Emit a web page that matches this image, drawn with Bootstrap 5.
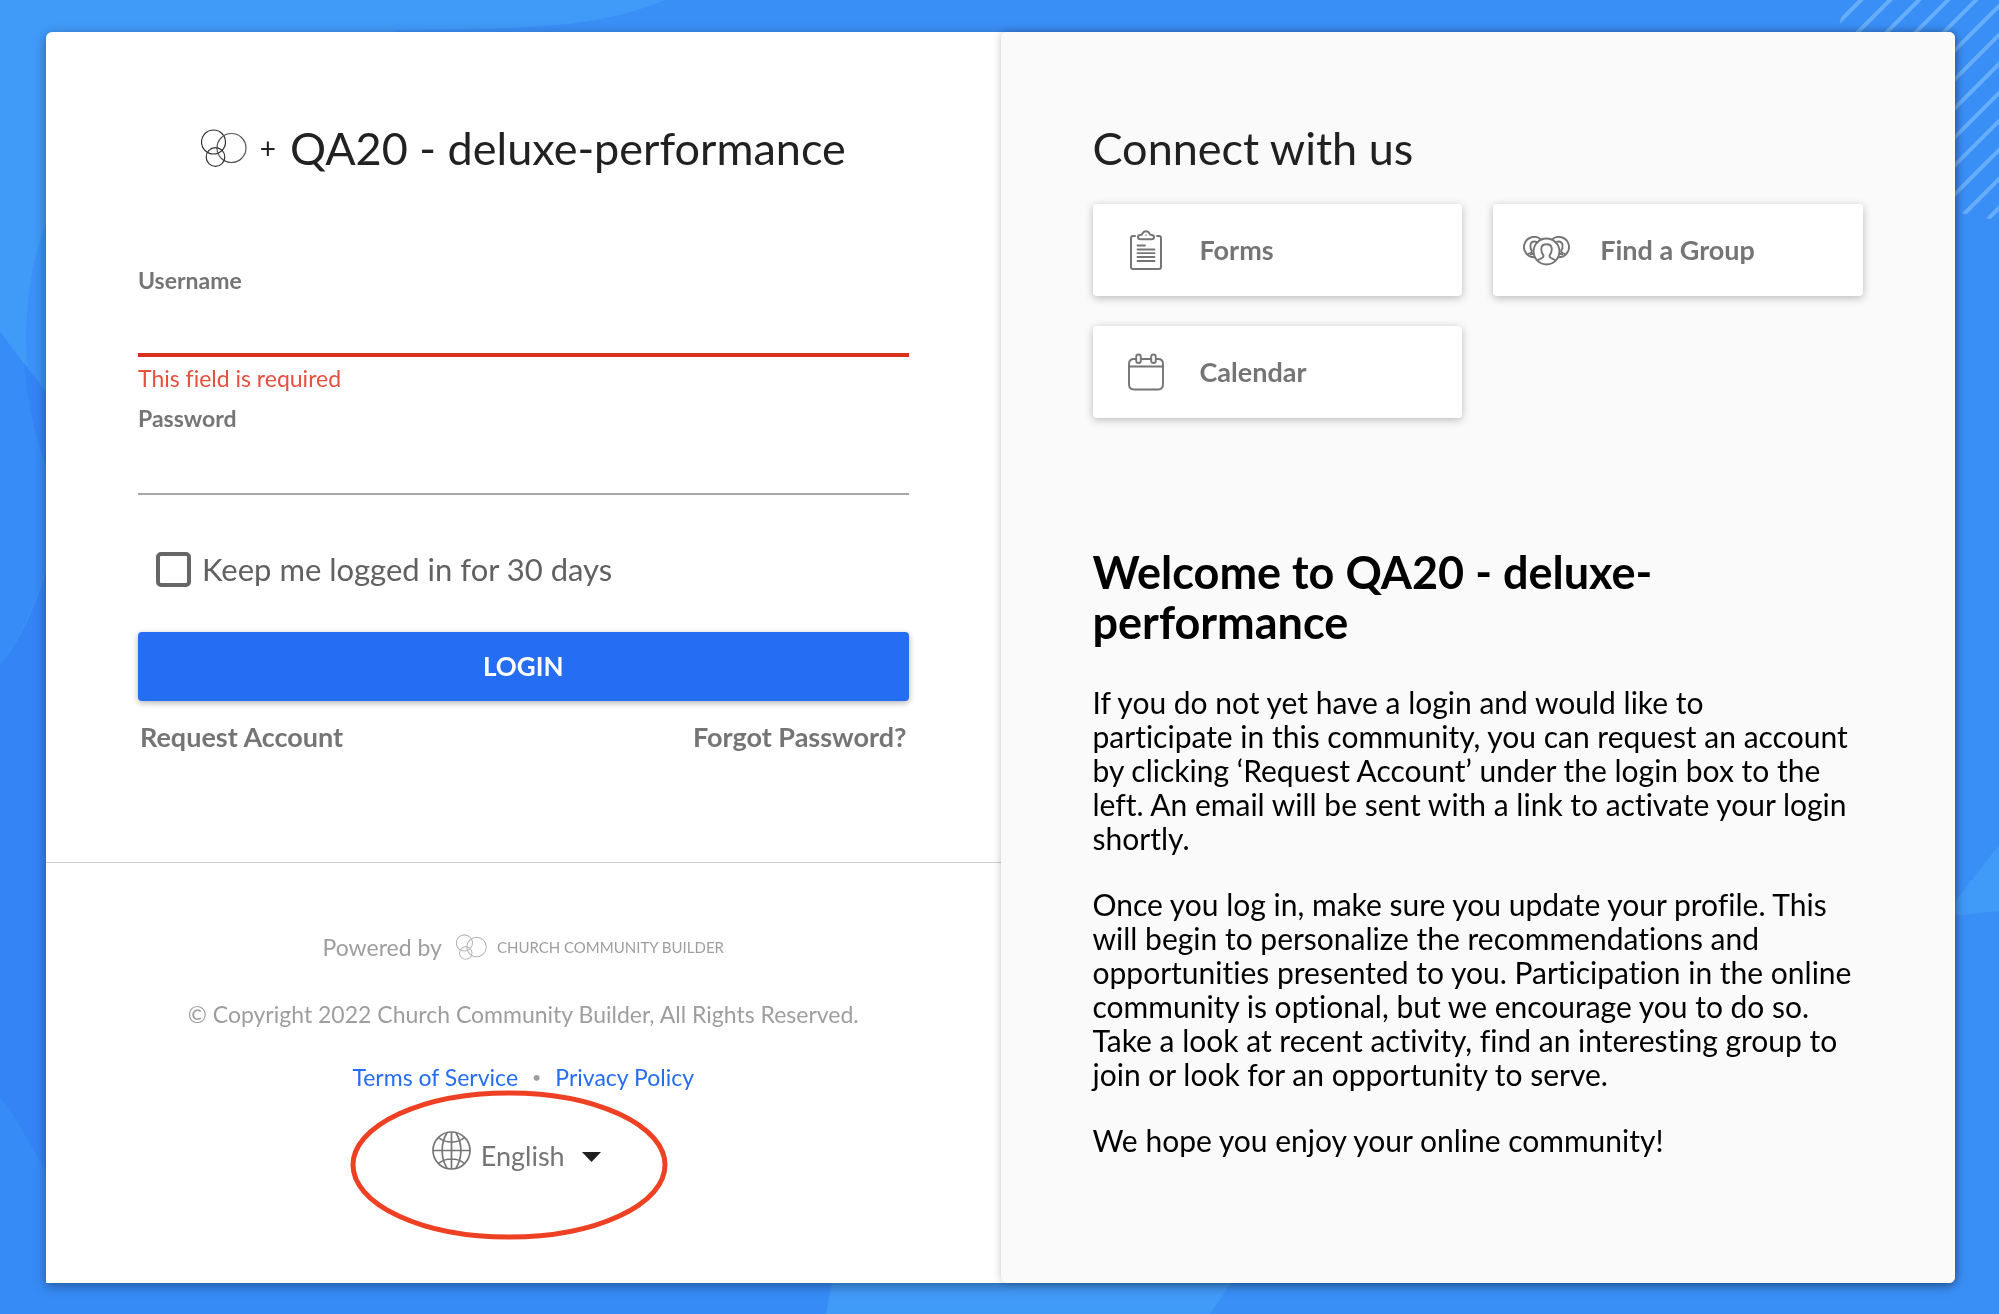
<!DOCTYPE html>
<html lang="en">
<head>
<meta charset="utf-8">
<meta name="viewport" content="width=device-width, initial-scale=1">
<title>QA20 - deluxe-performance</title>
<link href="https://cdn.jsdelivr.net/npm/bootstrap@5.3.0/dist/css/bootstrap.min.css" rel="stylesheet">
<script src="https://cdn.jsdelivr.net/npm/bootstrap@5.3.0/dist/js/bootstrap.bundle.min.js"></script>
<style>
  body { font-family: Lato, "Liberation Sans", sans-serif; font-variant-ligatures: no-common-ligatures; background: #3a8ff7; color: #000; }
  .backdrop { position: fixed; inset: 0; width: 100%; height: 100%; z-index: -1; }
  .shell { padding: 32px 44px 31px 46px; }
  .sheet { background: #fff; border-radius: 6px 6px 6px 0; box-shadow: 0 3px 12px rgba(0,0,0,.36); }
  .pane-pad { padding-left: 92px; padding-right: 92px; }
  .pane-form { padding-top: 87px; padding-bottom: 109px; border-bottom: 1px solid #cfcfcf; }
  .pane-info { background: #fafafa; border-radius: 6px; box-shadow: 0 0 8px rgba(0,0,0,.24); padding-top: 87px; padding-bottom: 88px; }
  .headline { font-size: 45px; line-height: 58px; color: #212121; font-weight: 400; margin: 0; }
  .plus-sign { font-size: 28px; line-height: 56px; color: #212121; margin: 0 14px 0 13px; }
  .user-block { margin-top: 89px; }
  .field-label { font-size: 23px; line-height: 28px; font-weight: 700; color: #757575; display: block; }
  .line-input.form-control { height: 63px; border: 0; border-bottom: 2px solid #a6a6a6; border-radius: 0; padding: 0; font-size: 27px; background: transparent; box-shadow: none; }
  .line-input.form-control.bad { border-bottom: 4px solid #d8321f; }
  .error-text { font-size: 23px; line-height: 28px; color: #e5503f; margin: 7px 0 12px; }
  .keep-row { margin: 56px 0 45px 18px; gap: 11px; }
  .keep-row .form-check-input { width: 35px; height: 35px; margin: 0; border: 4px solid #666; border-radius: 5px; }
  .keep-label { font-size: 31px; line-height: 36px; color: #616161; }
  .btn-login { height: 69px; font-size: 26px; font-weight: 700; color: #fff; background: #256df2; border: 0; border-radius: 4px; box-shadow: 0 2px 6px rgba(0,0,0,.3); }
  .btn-login:hover { background: #1d5fd8; color: #fff; }
  .sub-links { margin-top: 20px; padding: 0 2px; }
  .sub-links a { font-size: 27px; line-height: 32px; font-weight: 700; color: #757575; text-decoration: none; }
  .foot { color: #9e9e9e; font-size: 23px; line-height: 28px; padding-top: 70px; }
  .foot a { color: #256df2; text-decoration: none; }
  .foot p { margin: 0; }
  .brand-mark { margin: 0 10px 0 14px; }
  .brand-name { font-size: 15px; }
  .copy-line { padding-top: 39px; }
  .legal { padding: 35px 0 40px; gap: 14px; }
  .legal-dot { font-size: 16px; }
  .lang-select { appearance: none; border: 0; background: transparent; color: #757575; font-size: 27px; line-height: 32px; height: 32px; padding: 0 50px 0 0; margin-left: 10px; }
  .lang-caret { position: absolute; right: 14px; bottom: 10px; pointer-events: none; }
  .ring { position: absolute; left: -82px; top: -41px; pointer-events: none; }
  .tile-grid { display: grid; grid-template-columns: 1fr 1fr; gap: 30px 31px; margin-top: 27px; }
  .tile { height: 92px; background: #fff; border-radius: 4px; box-shadow: 0 2px 8px rgba(0,0,0,.26); color: #757575; font-size: 27px; font-weight: 700; text-decoration: none; }
  .tile-icon { width: 107px; text-align: center; line-height: 1; }
  .tile-icon svg { vertical-align: middle; }
  .welcome { font-size: 45px; line-height: 50px; font-weight: 700; margin: 129px 0 38px; }
  .prose p { font-size: 30px; line-height: 34px; margin-bottom: 32px; }
</style>
</head>
<body>
<svg class="backdrop" viewBox="0 0 1999 1314" preserveAspectRatio="none" aria-hidden="true">
  <defs><clipPath id="disc"><circle cx="2010" cy="48" r="172"/></clipPath></defs>
  <path d="M0 0H665C590 32 500 28 400 30L46 110V393L0 332Z" fill="#409af8"/>
  <path d="M60 195C15 270 15 400 60 500Z" fill="#3b91f7"/>
  <path d="M0 332L46 393L60 410V520C40 590 25 630 0 665Z" fill="#378cf7"/>
  <path d="M24 363L60 410V500C40 460 28 410 24 363Z" fill="#3484f6"/>
  <path d="M0 665C25 635 40 600 60 520V1190C35 1160 20 1120 0 1098Z" fill="#3484f6"/>
  <path d="M0 1098C20 1120 35 1160 60 1190H840L826 1314H0Z" fill="#378bf7"/>
  <path d="M835 1270H1240L1210 1314H826Z" fill="#409af8"/>
  <path d="M1950 908L1999 845V911L1950 916Z" fill="#409af8"/>
  <g clip-path="url(#disc)" stroke="#66aef9" stroke-width="4">
    <path d="M1661 200L1871 -10M1690 200L1900 -10M1719 200L1929 -10M1748 200L1958 -10M1776 200L1986 -10M1805 200L2015 -10M1734 300L2044 -10M1763 300L2073 -10M1792 300L2102 -10M1820 300L2130 -10M1849 300L2159 -10M1878 300L2188 -10M1907 300L2217 -10"/>
  </g>
</svg>

<main class="shell min-vh-100 d-flex">
  <div class="sheet flex-grow-1 row g-0">
    <section class="col-6">
      <div class="pane-form pane-pad">
        <div class="d-flex justify-content-center align-items-center">
          <svg width="46" height="38" viewBox="0 0 46 38" fill="none" stroke="#333" stroke-width="1.2" aria-hidden="true">
            <circle cx="12.5" cy="13" r="12"/><circle cx="30.5" cy="19" r="14.5" stroke="#555"/><circle cx="14.5" cy="28" r="9.3"/>
          </svg>
          <span class="plus-sign">+</span>
          <h1 class="headline">QA20 - deluxe-performance</h1>
        </div>
        <form>
          <div class="user-block">
            <label class="field-label" for="username">Username</label>
            <input class="form-control line-input bad" id="username" type="text" aria-describedby="username-error">
            <div class="error-text" id="username-error">This field is required</div>
          </div>
          <div>
            <label class="field-label" for="password">Password</label>
            <input class="form-control line-input" id="password" type="password">
          </div>
          <div class="keep-row d-flex align-items-center">
            <input class="form-check-input" id="keep" type="checkbox">
            <label class="keep-label" for="keep">Keep me logged in for 30 days</label>
          </div>
          <button class="btn btn-login w-100" type="submit">LOGIN</button>
          <div class="sub-links d-flex justify-content-between">
            <a href="#">Request Account</a>
            <a href="#">Forgot Password?</a>
          </div>
        </form>
      </div>
      <footer class="foot d-flex flex-column align-items-center">
        <div class="d-flex align-items-center">
          <span>Powered by</span>
          <svg class="brand-mark" width="31" height="26" viewBox="0 0 46 38" fill="none" stroke="#b5b5b5" stroke-width="1.5" aria-hidden="true">
            <circle cx="12.5" cy="13" r="12"/><circle cx="30.5" cy="19" r="14.5"/><circle cx="14.5" cy="28" r="9.3"/>
          </svg>
          <span class="brand-name">CHURCH COMMUNITY BUILDER</span>
        </div>
        <p class="copy-line">© Copyright 2022 Church Community Builder, All Rights Reserved.</p>
        <div class="legal d-flex"><a href="#">Terms of Service</a><span class="legal-dot">•</span><a href="#">Privacy Policy</a></div>
        <div class="position-relative d-flex align-items-end">
          <svg width="39" height="41" viewBox="0 0 39 41" fill="none" stroke="#757575" stroke-width="1.7" aria-hidden="true">
            <circle cx="19.5" cy="19.5" r="18.5"/><path d="M1 19.5H38M19.5 1V38M15 2C8.500 12 8.500 27 15 37M24 2C30.500 12 30.500 27 24 37M6.500 6.500C13 12.500 26 12.500 32.500 6.500M6.500 32.500C13 26.500 26 26.500 32.500 32.500"/>
          </svg>
          <select class="lang-select" aria-label="Language"><option>English</option></select>
          <svg class="lang-caret" width="19" height="10" viewBox="0 0 19 10" aria-hidden="true"><path d="M0 0H19L9.500 10Z" fill="#212121"/></svg>
          <svg class="ring" width="318" height="150" viewBox="0 0 318 150" aria-hidden="true"><ellipse cx="159" cy="75" rx="156" ry="72" fill="none" stroke="#ee4023" stroke-width="5"/></svg>
        </div>
      </footer>
    </section>

    <section class="col-6 pane-info pane-pad">
      <h2 class="headline">Connect with us</h2>
      <nav class="tile-grid" aria-label="Connect with us">
        <a class="tile d-flex align-items-center" href="#">
          <span class="tile-icon"><svg width="32" height="40" viewBox="0 0 32 40" fill="none" stroke="#757575" stroke-width="2" stroke-linecap="round" stroke-linejoin="round" aria-hidden="true">
            <path d="M5 6H3Q1 6 1 8V37Q1 39 3 39H29Q31 39 31 37V8Q31 6 29 6H27"/>
            <path d="M10.500 9.300Q8 9.300 8 7Q8 5 10.500 5Q12 5 12.500 3.500Q13.500 1.200 16 1.200Q18.500 1.200 19.500 3.500Q20 5 21.500 5Q24 5 24 7Q24 9.300 21.500 9.300Z"/>
            <path d="M7.500 15.500H15M7.500 19.500H24.500M7.500 23.200H24.500M7.500 27H24.500M7.500 31H24.500" stroke-width="1.800"/><circle cx="16" cy="5" r=".1" stroke-width="1"/>
          </svg></span><span>Forms</span>
        </a>
        <a class="tile d-flex align-items-center" href="#">
          <span class="tile-icon"><svg width="47" height="30" viewBox="0 0 47 30" fill="none" stroke="#757575" stroke-width="1.900" stroke-linejoin="round" aria-hidden="true">
            <path d="M18 3.500A10.200 10.200 0 1 0 12.500 21.200M29 3.500A10.200 10.200 0 1 1 34.500 21.200"/>
            <path d="M4.500 18.500C6.500 17 9 16.800 9 15C7 12.500 6 5.500 11.500 5.500C13 5.500 14 6 15 7M42.500 18.500C40.500 17 38 16.800 38 15C40 12.500 41 5.500 35.500 5.500C34 5.500 33 6 32 7"/>
            <path d="M7 18.500L11.500 17.500M40 18.500L35.500 17.500"/>
            <circle cx="23.500" cy="15.500" r="13"/>
            <path d="M14.500 24.500C16 22.500 21 22.800 20.500 19.500C18 16.500 16 8.200 23.500 8.200C31 8.200 29 16.500 26.500 19.500C26 22.800 31 22.500 32.500 24.500"/>
          </svg></span><span>Find a Group</span>
        </a>
        <a class="tile d-flex align-items-center" href="#">
          <span class="tile-icon"><svg width="36" height="38" viewBox="0 0 36 38" fill="none" stroke="#757575" stroke-width="1.900" aria-hidden="true">
            <path d="M8 6H6Q1 6 1 11V31Q1 36.500 6 36.500H30Q35 36.500 35 31V11Q35 6 30 6H28M13 6H23M1 13.500H35"/>
            <rect x="8.200" y="1.500" width="4.600" height="8.500" rx="2.300"/><rect x="23.200" y="1.500" width="4.600" height="8.500" rx="2.300"/>
          </svg></span><span>Calendar</span>
        </a>
      </nav>
      <h2 class="welcome">Welcome to QA20 - deluxe-performance</h2>
      <div class="prose">
        <p>If you do not yet have a login and would like to<br>participate in this community, you can request an account by clicking ‘Request Account’ under the login box to the left. An email will be sent with a link to activate your login shortly.</p>
        <p>Once you log in, make sure you update your profile. This will begin to personalize the recommendations and opportunities presented to you. Participation in the online community is optional, but we encourage you to do so. Take a look at recent activity, find an interesting group to join or look for an opportunity to serve.</p>
        <p>We hope you enjoy your online community!</p>
      </div>
    </section>
  </div>
</main>
</body>
</html>
